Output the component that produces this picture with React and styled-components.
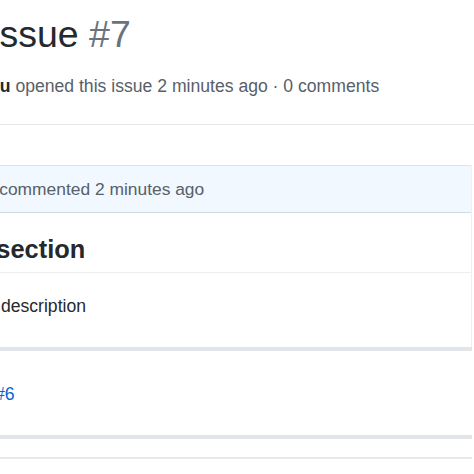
import React from 'react';
import styled, { createGlobalStyle } from 'styled-components';

const GlobalStyle = createGlobalStyle`
  html, body {
    margin: 0;
    padding: 0;
    background: #ffffff;
    overflow: hidden;
  }
  body {
    font-family: "Liberation Sans", Arial, sans-serif;
    color: #24292e;
  }
`;

const Page = styled.div`
  width: 474px;
  height: 474px;
  overflow: hidden;
`;

// the screenshot is cropped on the left, so the page sits a bit off to the left
const Container = styled.div`
  margin-left: -64px;
  width: 538px;
`;

const IssueHeader = styled.div`
  padding: 12px 0 26px 53px;
  border-bottom: 1px solid #e6e8eb;
`;

const Title = styled.h1`
  margin: 0;
  font-size: 37.5px;
  line-height: 44px;
  font-weight: 400;
  color: #24292e;
  white-space: nowrap;
`;

const Number = styled.span`
  color: #6a737d;
`;

const Meta = styled.div`
  margin-top: 18px;
  font-size: 17.6px;
  line-height: 24px;
  color: #586069;
  white-space: nowrap;

  b {
    color: #24292e;
  }
`;

const Timeline = styled.div`
  margin-top: 40px;
  margin-right: 2px;
`;

const CommentBox = styled.div`
  border-right: 1px solid #eef1f4;
`;

const CommentHeader = styled.div`
  display: flex;
  align-items: center;
  height: 46px;
  padding-left: 37px;
  background: #f1f8ff;
  border-top: 1px solid #dbe3eb;
  border-bottom: 1px solid #d1d9e1;
  font-size: 17.4px;
  color: #586069;
  white-space: nowrap;

  b {
    margin-right: 5px;
  }
`;

const CommentBody = styled.div`
  padding: 20px 0 29px 18px;
`;

const Heading = styled.h2`
  margin: 0;
  padding-bottom: 7px;
  font-size: 25.4px;
  line-height: 32px;
  font-weight: 700;
  color: #24292e;
  border-bottom: 1px solid #eceef1;
  white-space: nowrap;
`;

const Paragraph = styled.p`
  margin: 21px 0 0;
  font-size: 17.6px;
  line-height: 24px;
  color: #24292e;
  white-space: nowrap;
`;

const Bar = styled.div`
  height: 4px;
  background: #e1e4e8;
`;

const RefItem = styled.div`
  padding: 31px 0 29px 18px;
  font-size: 17.6px;
  line-height: 24px;
  color: #24292e;
  white-space: nowrap;
`;

const Link = styled.a`
  color: #0366d6;
  text-decoration: none;
`;

const Rule = styled.div`
  margin-top: 18px;
  height: 2px;
  background: #e6e8eb;
`;

export default function App() {
  return (
    <Page>
      <GlobalStyle />
      <Container>
        <IssueHeader>
          <Title>
            Issue <Number>#7</Number>
          </Title>
          <Meta>
            <b>Lu</b> opened this issue 2 minutes ago · 0 comments
          </Meta>
        </IssueHeader>

        <Timeline>
          <CommentBox>
            <CommentHeader>
              <b>Lu</b>commented 2 minutes ago
            </CommentHeader>
            <CommentBody>
              <Heading>My section</Heading>
              <Paragraph>Issue description</Paragraph>
            </CommentBody>
          </CommentBox>
          <Bar />
          <RefItem>
            Refs <Link href="#">#6</Link>
          </RefItem>
          <Bar />
          <Rule />
        </Timeline>
      </Container>
    </Page>
  );
}
